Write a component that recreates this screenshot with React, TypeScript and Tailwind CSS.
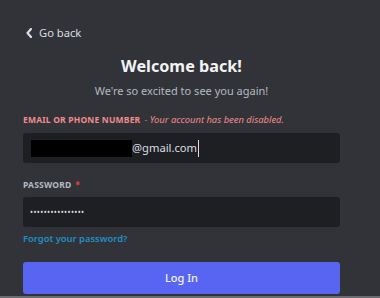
export default function App() {
  return (
    <div
      className="w-[380px] h-[298px] bg-[#313338] overflow-hidden flex flex-col border-b-2 border-[#6b6c70]"
      style={{ fontFamily: '"Noto Sans", "Open Sans", sans-serif' }}
    >
      <div className="pl-[23px] pr-[40px] flex flex-col">
        {/* Go back */}
        <div className="flex items-center gap-[7px] pl-[3px] pt-[27px] h-[39px] text-[#dbdee1]">
          <svg width="6" height="10" viewBox="0 0 6 10" fill="none">
            <path d="M5 1L1.5 5L5 9" stroke="currentColor" strokeWidth="2.2" strokeLinecap="round" strokeLinejoin="round" />
          </svg>
          <span className="text-[11.2px] leading-[12px]">Go back</span>
        </div>

        {/* Heading */}
        <div className="flex flex-col items-center mt-[16px]">
          <h1 className="text-[16.2px] font-bold text-[#f2f3f5] leading-[22px]">Welcome back!</h1>
          <p className="text-[11px] text-[#b5bac1] mt-[6px] leading-[16px]">
            We're so excited to see you again!
          </p>
        </div>

        {/* Email */}
        <div className="mt-[15px] flex items-baseline gap-[4px] text-[#f28b8d] leading-[12px]">
          <span className="text-[8.5px] font-bold tracking-[0.2px]">EMAIL OR PHONE NUMBER</span>
          <span className="text-[9.4px] italic">- Your account has been disabled.</span>
        </div>
        <div className="mt-[7px] h-[30px] bg-[#1e1f22] rounded-[3px] flex items-center pl-[8px]">
          <div className="w-[101px] h-[17px] bg-black" />
          <span className="text-[11.2px] text-[#dbdee1]">@gmail.com</span>
          <span className="w-px h-[17px] bg-[#dbdee1] ml-[1px]" />
        </div>

        {/* Password */}
        <div className="mt-[16px] flex items-center gap-[4px] leading-[12px]">
          <span className="text-[8.5px] font-bold text-[#b5bac1] tracking-[0.2px]">PASSWORD</span>
          <span className="text-[8.5px] font-bold text-[#f23f42]">*</span>
        </div>
        <div className="mt-[6px] h-[30px] bg-[#1e1f22] rounded-[3px] flex items-center pl-[7px]">
          <span className="text-[8px] text-[#dbdee1] tracking-[0.4px] leading-none">
            ••••••••••••••••
          </span>
        </div>

        <a className="mt-[5px] text-[9.4px] text-[#1f8fc4] font-semibold leading-[14px]">Forgot your password?</a>

        <button className="mt-[16px] h-[32px] w-full bg-[#5865f2] rounded-[3px] text-[11px] text-[#f2f3f5] font-medium">
          Log In
        </button>
      </div>
    </div>
  );
}
